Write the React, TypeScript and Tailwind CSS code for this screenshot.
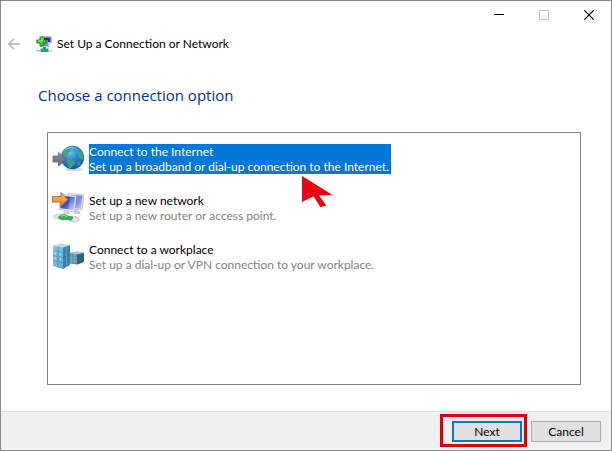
import { useState } from "react";

type OptionId = "internet" | "network" | "workplace";

type ConnectionOption = {
  id: OptionId;
  title: string;
  description: string;
  icon: () => React.JSX.Element;
};

function WizardIcon() {
  return (
    <svg width="16" height="16" viewBox="0 0 16 16" aria-hidden="true">
      <defs>
        <linearGradient id="wizScreen" x1="0" y1="0" x2="1" y2="1">
          <stop offset="0" stopColor="#3d4fae" />
          <stop offset="1" stopColor="#8fa0e6" />
        </linearGradient>
      </defs>
      <path d="M6 0.5h9.500v6.500h-2.500v4H4.500V9z" fill="#cfd3de" stroke="#9aa0b4" strokeWidth="0.600" />
      <path d="M8 1.500h6.500v4.500H8z" fill="#26348f" />
      <path d="M5 4h7v6H5z" fill="url(#wizScreen)" />
      <path d="M7 11h3v1.500h2.500V16h-8v-3.500H7z" fill="#27a07a" />
      <path d="M0 14h4v1.200H0zM12.500 14H16v1.200h-3.500z" fill="#b4babf" />
      <path d="M4 1h3v3h3v3H7v3H4V7H.8V4H4z" fill="#49cf2c" stroke="#167d18" strokeWidth="0.900" />
      <path d="M4.800 2h1.400v2.800H2" fill="none" stroke="#a9f284" strokeWidth="0.800" />
    </svg>
  );
}

function GlobeIcon() {
  return (
    <svg width="32" height="32" viewBox="0 0 32 32" aria-hidden="true">
      <defs>
        <radialGradient id="globeSea" cx="0.4" cy="0.3" r="0.75">
          <stop offset="0" stopColor="#6fc0ee" />
          <stop offset="0.450" stopColor="#2b84cb" />
          <stop offset="1" stopColor="#14509c" />
        </radialGradient>
        <linearGradient id="globeArrow" x1="0" y1="0" x2="0" y2="1">
          <stop offset="0" stopColor="#8d909b" />
          <stop offset="1" stopColor="#666976" />
        </linearGradient>
      </defs>
      <ellipse cx="22" cy="26.500" rx="9" ry="1.800" fill="#d5d9de" />
      <circle cx="20.500" cy="14.500" r="11.700" fill="url(#globeSea)" />
      <path d="M11 9c2-3 5-5 8.500-5.500l.5 1.500-2 1.500.5 2-2.500 1.500-1.500 3-2.500 1-1.500-2z" fill="#3fa48a" />
      <path d="M24 5l3.500 1.500L31 11l.5 4.500-2 1.500-2-1.500-1.500-3.500L24 9.500z" fill="#3aa287" />
      <path d="M16 16l4 .5 3 2.500-1 3-2.500 2-1 1.500-2-1.500-.5-3-1-2.500z" fill="#3d9f7c" />
      <path d="M26 19.500l3-1-1.500 3.500-2 1z" fill="#3b9a94" />
      <path d="M14 6.500c3-2.500 8-2.500 11 0" fill="none" stroke="#c4e8f5" strokeWidth="1" opacity="0.600" />
      <path d="M1 13h5.500V9.500l7.500 7-7.500 6.500v-4H1z" fill="url(#globeArrow)" stroke="#565864" strokeWidth="0.700" />
    </svg>
  );
}

function NetworkIcon() {
  return (
    <svg width="32" height="32" viewBox="0 0 32 32" aria-hidden="true">
      <defs>
        <linearGradient id="netScreen" x1="0" y1="0" x2="1" y2="1">
          <stop offset="0" stopColor="#1530a8" />
          <stop offset="0.500" stopColor="#3451c8" />
          <stop offset="1" stopColor="#b7c8fa" />
        </linearGradient>
        <linearGradient id="netArrow" x1="0" y1="0" x2="0" y2="1">
          <stop offset="0" stopColor="#ffc184" />
          <stop offset="1" stopColor="#e8751a" />
        </linearGradient>
      </defs>
      <path d="M16 1.500l16 1-2 15.500-11-1z" fill="#e3e6ee" stroke="#b4b9c6" strokeWidth="0.700" />
      <path d="M20 3l10.500.7-1.700 13-8-.6z" fill="url(#netScreen)" />
      <path d="M25 3.400l5.500.3-1.700 13-5.500-.4z" fill="#e4ebff" opacity="0.400" />
      <path d="M23 18l4 .5 2 3.500h-7z" fill="#c7cbd3" />
      <path d="M9 2.500l15.500 1L22.500 20 7 17.500z" fill="#eceef5" stroke="#b4b9c6" strokeWidth="0.700" />
      <path d="M10 4l13 1-1.500 13L8.300 16.300z" fill="url(#netScreen)" />
      <path d="M18 5l5 .4-1.500 12.600-5-.8z" fill="#dfe7ff" opacity="0.300" />
      <path d="M12 18.500l5 .7 1 3-7-.7z" fill="#ced2d9" />
      <path d="M1 23.500l7-1.500 5 1.500-3 2.500-7 .5z" fill="#e6e8eb" stroke="#b9bdc3" strokeWidth="0.600" />
      <path d="M17 25.500l7-1 3 2v2.500l-5 1.500-5-2z" fill="#e2e4e8" stroke="#a9aeb5" strokeWidth="0.600" />
      <path d="M6 25.500c3-3 7-4 9.500-1.500l5.500 1-1.500 3-5-.5c-3 .8-6.500.4-8.500-2z" fill="#35b356" stroke="#198a36" strokeWidth="0.600" />
      <path d="M9 24.500c2-1.500 4-1.300 6 .3" fill="none" stroke="#9ceaa2" strokeWidth="1" />
      <path d="M.5 4.500h8.500V.5L16 7.500 9 14.500v-4.500H.5z" fill="url(#netArrow)" stroke="#b85414" strokeWidth="0.800" />
    </svg>
  );
}

function WorkplaceIcon() {
  return (
    <svg width="32" height="32" viewBox="0 0 32 32" aria-hidden="true">
      <defs>
        <linearGradient id="workFront" x1="0" y1="0" x2="1" y2="1">
          <stop offset="0" stopColor="#8fcbe4" />
          <stop offset="1" stopColor="#5ba9cb" />
        </linearGradient>
      </defs>
      <path d="M17 12l8-1.500 7 1.500v9l-7 2.500-8-1z" fill="#5d93ab" />
      <path d="M17 12l8-1.500 7 1.500-7 1.500z" fill="#a3cddb" />
      <path d="M25 13.500l7-1.500v9l-7 2.500z" fill="#31637c" />
      <path d="M19.500 13v9M22.500 13.300v9M17 16.500l8 .8M17 19.500l8 .8" stroke="#86b9cc" strokeWidth="0.600" />
      <path d="M1 4.500L9 2.500l9 1.500-7 2.500z" fill="#b9dfea" />
      <path d="M1 4.500l10 2V28L1 25z" fill="url(#workFront)" />
      <path d="M11 6.500L18 4v20l-7 4z" fill="#3c86ad" />
      <path d="M6 5.500v21" stroke="#3f8bb0" strokeWidth="0.800" />
      <path d="M1 9.500l10 2M1 14.500l10 2M1 19.500l10 2.500" stroke="#4d9abd" strokeWidth="0.700" />
      <path d="M3.500 11.500v1.500M8.500 12.500v1.500M3.500 16.500v1.500M8.500 17.500v1.500" stroke="#d5eef6" strokeWidth="0.900" />
      <path d="M11 11.500L18 9M11 16.500l7-2.500M11 22l7-3" stroke="#2a6e94" strokeWidth="0.700" />
      <path d="M14.500 5.500v20" stroke="#62a9ca" strokeWidth="0.700" />
    </svg>
  );
}

function PointerArrow() {
  return (
    <svg
      className="pointer-events-none absolute left-[213px] top-8"
      width="31"
      height="32"
      viewBox="0 0 31 32"
      aria-hidden="true"
    >
      <path d="M0 0L31 19.300 17 19.200 24.300 29.500 18.500 31.200 11.500 20.300 0 26z" fill="#e60012" />
    </svg>
  );
}

const options: ConnectionOption[] = [
  {
    id: "internet",
    title: "Connect to the Internet",
    description: "Set up a broadband or dial-up connection to the Internet.",
    icon: GlobeIcon,
  },
  {
    id: "network",
    title: "Set up a new network",
    description: "Set up a new router or access point.",
    icon: NetworkIcon,
  },
  {
    id: "workplace",
    title: "Connect to a workplace",
    description: "Set up a dial-up or VPN connection to your workplace.",
    icon: WorkplaceIcon,
  },
];

function TitleBar() {
  return (
    <div className="flex h-7 justify-end">
      <button type="button" aria-label="Minimize" className="flex w-[45px] items-center justify-center">
        <svg width="10" height="10" viewBox="0 0 10 10">
          <path d="M0 4.500h10" stroke="#000" />
        </svg>
      </button>
      <button type="button" aria-label="Maximize" disabled className="flex w-[45px] items-center justify-center">
        <svg width="10" height="10" viewBox="0 0 10 10">
          <path d="M.5.5h9v9h-9z" fill="none" stroke="#c4c4c4" />
        </svg>
      </button>
      <button type="button" aria-label="Close" className="flex w-[45px] items-center justify-center">
        <svg width="10" height="10" viewBox="0 0 10 10">
          <path d="M.3.3l9.400 9.400M9.700.3L.3 9.700" stroke="#000" strokeWidth="1.200" />
        </svg>
      </button>
    </div>
  );
}

export default function App() {
  const [selected, setSelected] = useState<OptionId>("internet");

  return (
    <div className="flex min-h-screen flex-col border border-[#8a8a8a] bg-white font-['Lato','Open_Sans',sans-serif] text-xs text-black">
      <TitleBar />

      <header className="flex h-[30px] items-center pl-[7px]">
        <button type="button" aria-label="Back" disabled className="mr-4">
          <svg width="12" height="12" viewBox="0 0 12 12">
            <path d="M.8 6H12M6 .8L.8 6 6 11.200" fill="none" stroke="#b4b4b4" strokeWidth="1.400" />
          </svg>
        </button>
        <WizardIcon />
        <h1 className="ml-[5px]">Set Up a Connection or Network</h1>
      </header>

      <main className="flex grow flex-col pt-6 pr-[30px] pb-[26px] pl-[46px]">
        <h2 className="-ml-[9px] font-['Open_Sans',sans-serif] text-[15px] leading-6 text-[#003399]">
          Choose a connection option
        </h2>

        <div
          role="radiogroup"
          aria-label="Connection option"
          className="mt-[25px] flex grow flex-col gap-[17px] border border-[#828282] pt-[10px] pl-1"
        >
          {options.map(({ id, title, description, icon: Icon }) => {
            const active = selected === id;
            return (
              <label key={id} className="flex h-8 items-center gap-[5px]">
                <input
                  type="radio"
                  name="connection"
                  className="sr-only"
                  checked={active}
                  onChange={() => setSelected(id)}
                />
                <Icon />
                <span className="relative">
                  <span className={active ? "block bg-[#0078d7] pr-0.5 leading-[15px] text-white" : "block leading-[15px]"}>
                    <span className="block">{title}</span>
                    <span className={active ? "block" : "block text-[#838383]"}>{description}</span>
                  </span>
                  {active && <PointerArrow />}
                </span>
              </label>
            );
          })}
        </div>
      </main>

      <footer className="flex h-[39px] justify-end gap-1 border-t border-[#dfdfdf] bg-[#f0f0f0] pt-0.5 pr-[10px]">
        <div className="h-[33px] border-3 border-[#d7000f] pt-1 pl-[9px] pr-0.5">
          <button type="button" className="h-[21px] w-[70px] border-2 border-[#0078d7] bg-[#e1e1e1] leading-4">
            Next
          </button>
        </div>
        <button type="button" className="mt-[7px] h-[21px] w-[70px] border border-[#adadad] bg-[#e1e1e1] leading-4">
          Cancel
        </button>
      </footer>
    </div>
  );
}
